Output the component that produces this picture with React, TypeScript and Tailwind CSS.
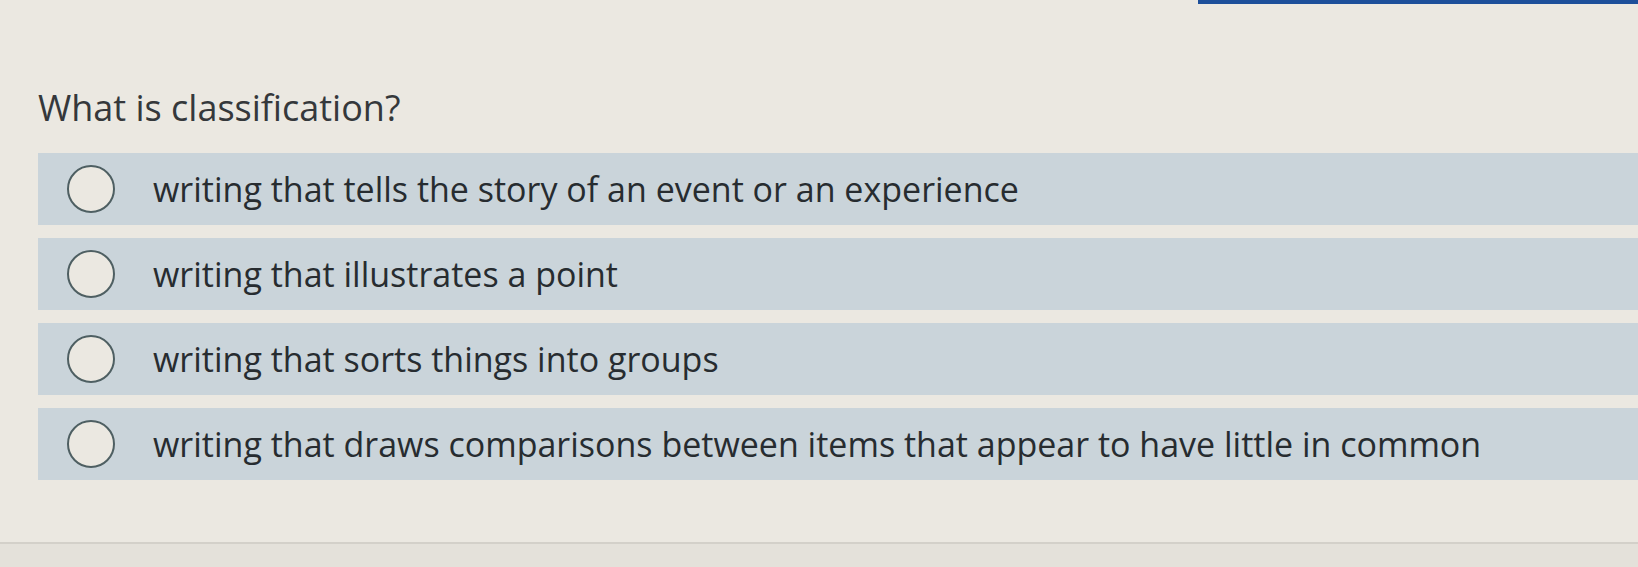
import React from 'react';

const choices = [
  'writing that tells the story of an event or an experience',
  'writing that illustrates a point',
  'writing that sorts things into groups',
  'writing that draws comparisons between items that appear to have little in common',
];

export default function App() {
  return (
    <div
      className="w-[1638px] h-[567px] overflow-hidden bg-[#ebe8e1] flex flex-col"
      style={{ fontFamily: '"Open Sans", Lato, sans-serif' }}
    >
      {/* header strip */}
      <div className="flex h-[4px]">
        <div className="flex-1" />
        <div className="w-[440px] bg-[#1d4f9a]" />
      </div>

      {/* question */}
      <div className="pl-[38px] pt-[83px] flex flex-col">
        <h1 className="text-[36px] leading-[42px] text-[#35383b]">What is classification?</h1>

        <div className="mt-[24px] flex flex-col gap-[13px]">
          {choices.map((c, i) => (
            <label key={i} className="h-[72px] bg-[#cad4da] flex items-center cursor-pointer">
              <span className="ml-[29px] w-[48px] h-[48px] rounded-full border-[2.5px] border-[#4e5f62] bg-[#ebe8e1] flex-shrink-0" />
              <span className="ml-[38px] text-[34px] text-[#272c30]">{c}</span>
            </label>
          ))}
        </div>
      </div>

      {/* page footer edge */}
      <div className="mt-auto h-[25px] border-t-2 border-[#d3d0c9] bg-[#e4e1da]" />
    </div>
  );
}
